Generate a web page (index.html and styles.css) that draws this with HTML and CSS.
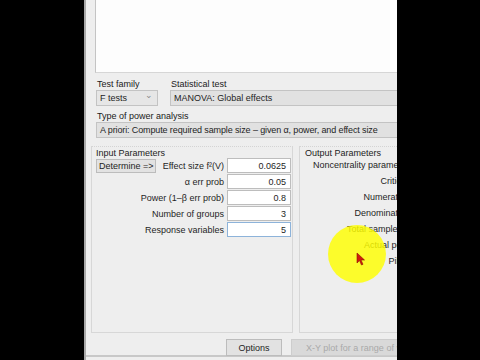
FILE: index.html
```html
<!DOCTYPE html>
<html lang="en">
<head>
  <meta charset="UTF-8" />
  <title>G*Power</title>
  <link rel="stylesheet" href="styles.css">
</head>
<body>
  <div class="stage">
    <div class="window">
      <div class="plot"></div>

      <div class="selectors">
        <div class="field-col">
          <div class="cap">Test family</div>
          <div class="combo small">F tests <span class="chev">&#8964;</span></div>
        </div>
        <div class="field-col">
          <div class="cap">Statistical test</div>
          <div class="combo">MANOVA: Global effects</div>
        </div>
      </div>

      <div class="field-col">
        <div class="cap">Type of power analysis</div>
        <div class="combo tight">A priori: Compute required sample size – given α, power, and effect size</div>
      </div>

      <div class="groups">
        <div class="group input-group">
          <div class="group-title">Input Parameters</div>
          <div class="param-grid">
            <button class="btn determine">Determine =&gt;</button>
            <div class="lbl">Effect size f²(V)</div>
            <div class="num">0.0625</div>

            <div class="lbl span2">α err prob</div>
            <div class="num">0.05</div>

            <div class="lbl span2">Power (1–β err prob)</div>
            <div class="num">0.8</div>

            <div class="lbl span2">Number of groups</div>
            <div class="num">3</div>

            <div class="lbl span2">Response variables</div>
            <div class="num focus">5</div>
          </div>
        </div>

        <div class="group output-group">
          <div class="group-title">Output Parameters</div>
          <div class="out-list">
            <div class="lbl">Noncentrality parameter λ</div>
            <div class="lbl">Critical F</div>
            <div class="lbl">Numerator df</div>
            <div class="lbl">Denominator df</div>
            <div class="lbl">Total sample size</div>
            <div class="lbl">Actual power</div>
            <div class="lbl">Pillai V</div>
          </div>
        </div>
      </div>

      <div class="actions">
        <button class="btn options">Options</button>
        <button class="btn disabled">X-Y plot for a range of values</button>
      </div>

      <div class="highlight"></div>
      <svg class="cursor" width="10" height="14" viewBox="0 0 10 14">
        <path d="M1 1 L1 11 L3.5 8.6 L5.5 13 L7 12.3 L5 8 L8.5 8 Z" fill="#d21a0a" stroke="#8a1006" stroke-width="0.6"/>
      </svg>
    </div>
  </div>
</body>
</html>
```

FILE: styles.css
```css
* {
  box-sizing: border-box;
  margin: 0;
  padding: 0;
}

body {
  background: #000;
  width: 480px;
  height: 360px;
  overflow: hidden;
  font-family: 'Liberation Sans', Arial, sans-serif;
  font-size: 9px;
  color: #1e1e1e;
}

.stage {
  display: flex;
  padding-left: 84px;
}

.window {
  position: relative;
  width: 313px;
  height: 360px;
  overflow: hidden;
  background: #eeeeee;
  border-left: 2px solid #a9a9a9;
  padding-left: 10px;
  display: flex;
  flex-direction: column;
}

.plot {
  height: 73px;
  margin-left: -1px;
  margin-right: -20px;
  background: #fdfdfd;
  border-left: 1px solid #c4c4c4;
  border-bottom: 1px solid #d6d6d6;
}

.selectors {
  display: grid;
  grid-template-columns: 62px 1fr;
  column-gap: 12px;
  margin-top: 6px;
}

.field-col {
  display: flex;
  flex-direction: column;
}

.cap {
  height: 11px;
  line-height: 11px;
  padding-left: 1px;
  color: #202020;
}

.selectors + .field-col {
  margin-top: 5px;
}

.combo {
  height: 16px;
  line-height: 14px;
  padding-left: 3px;
  background: #e1e1e1;
  border: 1px solid #c3c3c3;
  border-right: none;
  margin-right: -10px;
  white-space: nowrap;
  overflow: hidden;
}

.combo.tight {
  letter-spacing: -0.12px;
}

.combo.small {
  margin-right: 0;
  border-right: 1px solid #c3c3c3;
  display: flex;
  justify-content: space-between;
  background: #e6e6e6;
}

.chev {
  color: #8a8a8a;
  padding-right: 4px;
  font-size: 9px;
  line-height: 9px;
}

.groups {
  display: flex;
  gap: 6px;
  margin-top: 8px;
  margin-left: -5px;
  height: 187px;
}

.group {
  border: 1px solid #d7d7d7;
  border-top: 1px dotted #d4d4d4;
  padding: 1px 1px 0 4px;
}

.input-group {
  width: 202px;
  flex-shrink: 0;
}

.output-group {
  width: 140px;
  flex-shrink: 0;
  padding-left: 5px;
}

.group-title {
  height: 10px;
  line-height: 10px;
  color: #222;
}

.param-grid {
  display: grid;
  grid-template-columns: 60px 1fr 64px;
  grid-auto-rows: 16px;
  column-gap: 3px;
}

.lbl {
  text-align: right;
  line-height: 16px;
  white-space: nowrap;
}

.span2 {
  grid-column: 1 / 3;
}

.num {
  background: #fff;
  border: 1px solid #bdbdbd;
  text-align: right;
  padding-right: 4px;
  line-height: 14px;
  height: 15px;
}

.num.focus {
  border-color: #8db3da;
}

.btn {
  font-family: inherit;
  font-size: 9px;
  color: #1e1e1e;
  background: #e2e2e2;
  border: 1px solid #bcbcbc;
}

.determine {
  height: 14px;
  margin-top: 1px;
  line-height: 12px;
  text-align: left;
  padding-left: 2px;
}

.out-list {
  width: 111px;
  display: flex;
  flex-direction: column;
  margin-top: -1px;
}

.out-list .lbl {
  height: 16px;
}

.actions {
  display: flex;
  gap: 9px;
  margin-top: 6px;
  padding-left: 140px;
  height: 18px;
  border-bottom: 2px solid #c8c8c8;
  margin-left: -10px;
}

.actions .btn {
  flex-shrink: 0;
}

.options {
  width: 56px;
  height: 17px;
}

.disabled {
  width: 120px;
  height: 17px;
  color: #a9a9a9;
  background: #d9d9d9;
  border-color: #cdcdcd;
  text-align: left;
  padding-left: 14px;
  white-space: nowrap;
}

.highlight {
  position: absolute;
  left: 242px;
  top: 225px;
  width: 58px;
  height: 58px;
  border-radius: 50%;
  background: rgba(255, 255, 0, 0.82);
}

.cursor {
  position: absolute;
  left: 270px;
  top: 252px;
}
```
